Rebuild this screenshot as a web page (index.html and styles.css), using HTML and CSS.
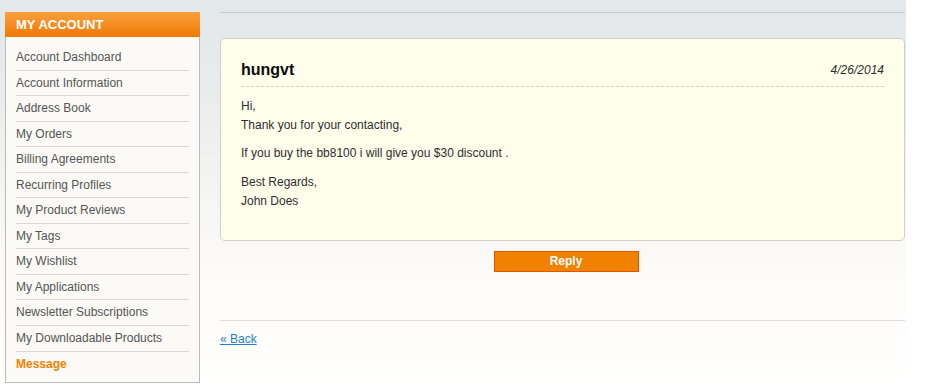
FILE: index.html
```html
<!DOCTYPE html>
<html>
<head>
<meta charset="utf-8">
<link rel="stylesheet" href="styles.css">
</head>
<body>
<div class="page">
  <div class="sidebar">
    <div class="side-head">My Account</div>
    <ul class="side-list">
      <li><a href="#">Account Dashboard</a></li>
      <li><a href="#">Account Information</a></li>
      <li><a href="#">Address Book</a></li>
      <li><a href="#">My Orders</a></li>
      <li><a href="#">Billing Agreements</a></li>
      <li><a href="#">Recurring Profiles</a></li>
      <li><a href="#">My Product Reviews</a></li>
      <li><a href="#">My Tags</a></li>
      <li><a href="#">My Wishlist</a></li>
      <li><a href="#">My Applications</a></li>
      <li><a href="#">Newsletter Subscriptions</a></li>
      <li><a href="#">My Downloadable Products</a></li>
      <li class="current"><strong>Message</strong></li>
    </ul>
  </div>
  <div class="main">
    <div class="msg">
      <div class="msg-head">
        <span class="msg-name">hungvt</span>
        <span class="msg-date">4/26/2014</span>
      </div>
      <div class="msg-body">
        <p>Hi,<br>Thank you for your contacting,</p>
        <p>If you buy the bb8100 i will give you $30 discount .</p>
        <p>Best Regards,<br>John Does</p>
      </div>
    </div>
    <div class="actions"><button class="reply" type="button">Reply</button></div>
    <div class="back-row"><a class="back" href="#">« Back</a></div>
  </div>
</div>
</body>
</html>
```

FILE: styles.css
```css
html, body {
  margin: 0;
  padding: 0;
  background: #fff;
}
body {
  font-family: "Liberation Sans", Arial, sans-serif;
  font-size: 12px;
  color: #2f2f2f;
}
.page {
  width: 906px;
  min-height: 392px;
  box-sizing: border-box;
  padding: 12px 0 0 5px;
  display: flex;
  align-items: flex-start;
  background: linear-gradient(180deg, #e2e7ea 0px, #e9ecec 90px, #f5f5f3 200px, #fdfcf9 290px, #ffffff 392px);
}
.sidebar {
  width: 195px;
  box-sizing: border-box;
  border: 1px solid #bbb;
  border-top: 0;
  background: #fbfaf6;
}
.side-head {
  height: 25px;
  margin: 0 -1px;
  padding-left: 11px;
  line-height: 25px;
  background: linear-gradient(180deg, #fba03c 0%, #ee7a06 100%);
  color: #fff;
  font-weight: bold;
  font-size: 13px;
  text-transform: uppercase;
}
.side-list {
  list-style: none;
  margin: 0;
  padding: 8px 10px 6px 10px;
}
.side-list li {
  padding: 5px 0;
  line-height: 14.55px;
  border-bottom: 1px solid #d9d8d4;
}
.side-list li:last-child {
  border-bottom: 0;
}
.side-list a {
  color: #555;
  text-decoration: none;
}
.side-list .current strong {
  color: #f18200;
  font-weight: bold;
}
.main {
  width: 685px;
  margin-left: 20px;
  border-top: 1px solid #ccc;
}
.msg {
  margin-top: 25px;
  border: 1px solid #cfcfcf;
  border-radius: 5px;
  background: #fffeeb;
  padding: 21px 20px 20px 20px;
  height: 203px;
  box-sizing: border-box;
}
.msg-head {
  display: flex;
  justify-content: space-between;
  align-items: center;
  height: 20px;
  padding-bottom: 6px;
  border-bottom: 1px dashed #cfcfcf;
}
.msg-name {
  font-size: 16px;
  font-weight: bold;
  color: #0a0a0a;
}
.msg-date {
  font-style: italic;
  color: #2f2f2f;
}
.msg-body {
  padding-top: 9.5px;
}
.msg-body p {
  margin: 0 0 9.5px;
  line-height: 19px;
}
.actions {
  display: flex;
  justify-content: center;
  margin-top: 10px;
  padding-left: 7px;
}
.reply {
  width: 145px;
  height: 21px;
  padding: 0;
  border: 1px solid #de5400;
  background: #f18200;
  color: #fff;
  font-family: "Liberation Sans", Arial, sans-serif;
  font-size: 12px;
  font-weight: bold;
  line-height: 19px;
}
.back-row {
  margin-top: 48px;
  border-top: 1px solid #ddd;
  padding-top: 11px;
}
.back {
  color: #1e7ec8;
  text-decoration: underline;
}
```
